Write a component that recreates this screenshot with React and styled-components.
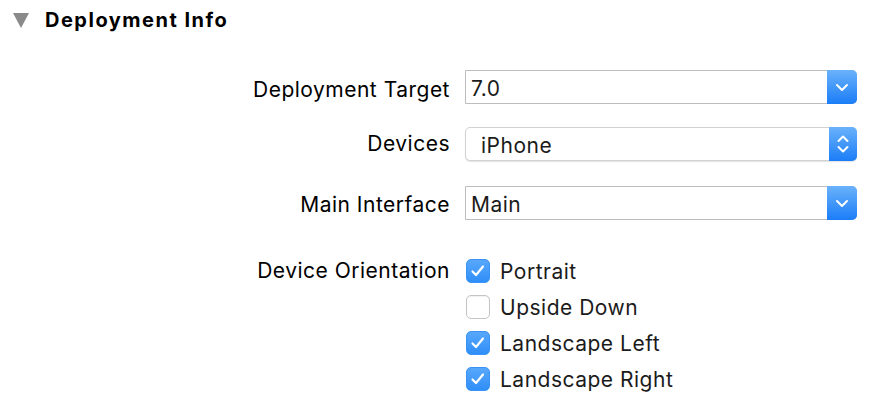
import React from "react";
import styled, { createGlobalStyle } from "styled-components";

const GlobalStyle = createGlobalStyle`
  html, body {
    margin: 0;
    background: #ffffff;
  }
  body {
    font-family: Inter, "Noto Sans", "Liberation Sans", sans-serif;
    color: #1b1b1b;
    width: 880px;
    height: 404px;
    overflow: hidden;
  }
`;

const Page = styled.div`
  width: 880px;
  height: 404px;
  box-sizing: border-box;
`;

const Header = styled.div`
  display: flex;
  align-items: center;
  gap: 16px;
  padding: 8px 0 0 13px;
  height: 24px;
`;

const Disclosure = styled.span`
  width: 0;
  height: 0;
  border-left: 8px solid transparent;
  border-right: 8px solid transparent;
  border-top: 15px solid #8a8a8a;
`;

const Title = styled.h2`
  margin: 0;
  font-size: 20px;
  font-weight: 700;
  color: #000;
  letter-spacing: 1.5px;
`;

const Form = styled.div`
  display: flex;
  flex-direction: column;
  padding-top: 38px;
`;

const Row = styled.div`
  display: flex;
  align-items: ${(p) => (p.$top ? "flex-start" : "center")};
  gap: 15px;
  margin-bottom: ${(p) => p.$gap || 0}px;
`;

const Label = styled.div`
  width: 450px;
  text-align: right;
  font-size: 21px;
  letter-spacing: 0.5px;
  color: #000;
  line-height: 24px;
  padding-top: ${(p) => p.$shift ?? 4}px;
  flex-shrink: 0;
`;

const Field = styled.div`
  position: relative;
  display: flex;
  width: 392px;
  height: 34px;
  box-sizing: border-box;
  border: 1px solid ${(p) => (p.$popup ? "#d2d2d2" : "#bdbdbd")};
  border-radius: ${(p) => (p.$popup ? "5px" : "0 5px 5px 0")};
  background: #fff;
  box-shadow: ${(p) => (p.$popup ? "0 1px 1px rgba(0,0,0,0.12)" : "none")};
`;

const Value = styled.div`
  flex: 1;
  display: flex;
  align-items: center;
  padding: 3px 0 0 ${(p) => (p.$popup ? "15px" : "5px")};
  font-size: 21px;
  letter-spacing: 0.5px;
  color: #1b1b1b;
`;

const Stepper = styled.div`
  width: ${(p) => (p.$popup ? "28px" : "30px")};
  margin: -1px -1px -1px 0;
  border-radius: 0 5px 5px 0;
  background: linear-gradient(#6ab2fb, #1b7df7);
  display: flex;
  align-items: center;
  justify-content: center;
`;

const Checks = styled.div`
  display: flex;
  flex-direction: column;
  gap: 12px;
`;

const CheckRow = styled.label`
  display: flex;
  align-items: center;
  gap: 10px;
  height: 24px;
  font-size: 21px;
  letter-spacing: 0.5px;
  color: #1b1b1b;
`;

const Box = styled.span`
  width: 24px;
  height: 24px;
  box-sizing: border-box;
  margin-left: 1px;
  border-radius: 5px;
  display: flex;
  align-items: center;
  justify-content: center;
  background: ${(p) => (p.$on ? "linear-gradient(#58a8fb, #2f8ef8)" : "#fff")};
  border: 1px solid ${(p) => (p.$on ? "#3a93f7" : "#c4c4c4")};
  box-shadow: ${(p) => (p.$on ? "none" : "inset 0 1px 1px rgba(0,0,0,0.06)")};
`;

const Chevron = () => (
  <svg width="14" height="9" viewBox="0 0 14 9">
    <path d="M2 2 L7 7 L12 2" fill="none" stroke="#fff" strokeWidth="2" strokeLinecap="round" strokeLinejoin="round" />
  </svg>
);

const UpDown = () => (
  <svg width="14" height="22" viewBox="0 0 14 22">
    <path d="M2.5 8 L7 3.5 L11.5 8" fill="none" stroke="#fff" strokeWidth="2" strokeLinecap="round" strokeLinejoin="round" />
    <path d="M2.5 14 L7 18.5 L11.5 14" fill="none" stroke="#fff" strokeWidth="2" strokeLinecap="round" strokeLinejoin="round" />
  </svg>
);

const Tick = () => (
  <svg width="16" height="14" viewBox="0 0 16 14">
    <path d="M2.5 7.5 L6 11 L13 2.5" fill="none" stroke="#fff" strokeWidth="2.2" strokeLinecap="round" strokeLinejoin="round" />
  </svg>
);

const orientations = [
  { name: "Portrait", on: true },
  { name: "Upside Down", on: false },
  { name: "Landscape Left", on: true },
  { name: "Landscape Right", on: true },
];

const App = () => (
  <Page>
    <GlobalStyle />
    <Header>
      <Disclosure />
      <Title>Deployment Info</Title>
    </Header>
    <Form>
      <Row $gap={23}>
        <Label $shift={6}>Deployment Target</Label>
        <Field>
          <Value>7.0</Value>
          <Stepper>
            <Chevron />
          </Stepper>
        </Field>
      </Row>
      <Row $gap={25}>
        <Label $shift={0}>Devices</Label>
        <Field $popup>
          <Value $popup>iPhone</Value>
          <Stepper $popup>
            <UpDown />
          </Stepper>
        </Field>
      </Row>
      <Row $gap={39}>
        <Label>Main Interface</Label>
        <Field>
          <Value>Main</Value>
          <Stepper>
            <Chevron />
          </Stepper>
        </Field>
      </Row>
      <Row $top>
        <Label $shift={0}>Device Orientation</Label>
        <Checks>
          {orientations.map((o) => (
            <CheckRow key={o.name}>
              <Box $on={o.on}>{o.on && <Tick />}</Box>
              {o.name}
            </CheckRow>
          ))}
        </Checks>
      </Row>
    </Form>
  </Page>
);

export default App;
